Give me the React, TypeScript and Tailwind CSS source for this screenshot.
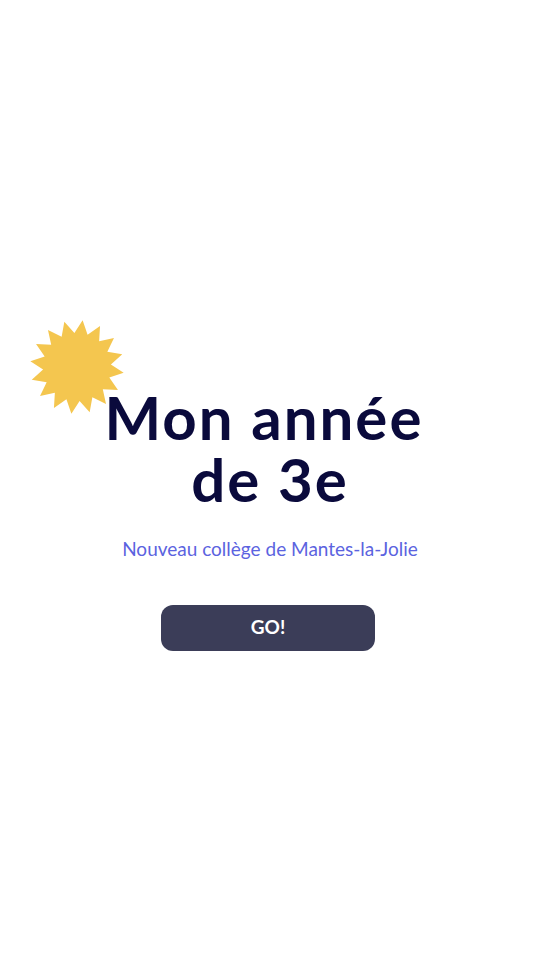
import React from "react";

function Star() {
  const n = 16;
  const cx = 50, cy = 50, R = 47, r = 34;
  const pts: string[] = [];
  for (let i = 0; i < n * 2; i++) {
    const a = (Math.PI * i) / n - Math.PI / 2 + 0.12;
    const rad = i % 2 === 0 ? R : r;
    pts.push(`${(cx + rad * Math.cos(a)).toFixed(2)},${(cy + rad * Math.sin(a)).toFixed(2)}`);
  }
  return (
    <svg width="100" height="100" viewBox="0 0 100 100">
      <polygon points={pts.join(" ")} fill="#f4c64f" />
    </svg>
  );
}

export default function App() {
  return (
    <div className="w-[540px] h-[960px] bg-white flex flex-col items-center justify-center pt-[76px]">
      <div className="relative flex flex-col items-center mr-[12px]">
        <div className="absolute left-[-78px] top-[-69px]">
          <Star />
        </div>
        <h1
          className="relative text-center text-[#0a0a3c] font-bold text-[60px] leading-[62px] tracking-[2px]"
          style={{ fontFamily: "Lato, 'Open Sans', sans-serif" }}
        >
          <span className="block">Mon année</span>
          <span className="block ml-[12px]">de 3e</span>
        </h1>
      </div>
      <p
        className="mt-[27px] text-[19px] leading-[24px] text-[#5b63e0]"
        style={{ fontFamily: "Lato, 'Noto Sans', sans-serif" }}
      >
        Nouveau collège de Mantes-la-Jolie
      </p>
      <button
        className="mt-[44px] mr-[4px] w-[214px] h-[46px] rounded-[12px] bg-[#3b3d58] text-white font-bold text-[19px]"
        style={{ fontFamily: "Lato, 'Noto Sans', sans-serif" }}
      >
        GO!
      </button>
    </div>
  );
}
